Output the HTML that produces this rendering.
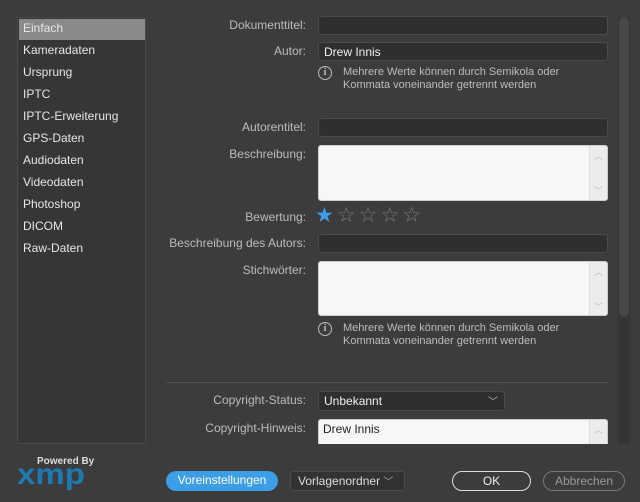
<!DOCTYPE html>
<html><head><meta charset="utf-8"><style>
*{box-sizing:border-box;margin:0;padding:0}
body{width:640px;height:502px;background:#3c3c3c;font-family:"Liberation Sans","DejaVu Sans",sans-serif;font-size:12px;color:#c8c8c8;position:relative;overflow:hidden}
.a{position:absolute}
.side{left:17px;top:17px;width:129px;height:427px;background:#363636;border:1px solid #4a4a4a;border-radius:2px}
.it{position:absolute;left:5px;color:#e6e6e6;font-size:12px}
.sel{left:1px;top:1px;width:126px;height:21px;background:#8a8a8a;position:absolute}
.lb{position:absolute;right:334px;text-align:right;color:#bcbcbc;white-space:nowrap}
.in{position:absolute;left:318px;width:290px;height:19px;background:#2f2f2f;border:1px solid #4a4a4a;border-radius:3px;color:#f0f0f0;padding:2px 5px}
.ta{position:absolute;left:318px;width:290px;background:#f7f7f7;border:1px solid #ccc;border-radius:3px;color:#222;padding:2px 4px;overflow:hidden}
.ta .sb{position:absolute;right:0;top:0;bottom:0;width:18px;background:#ececec;border-left:1px solid #ddd;color:#bbb;font-size:9px;text-align:center}
.info{position:absolute;left:343px;color:#bcbcbc;font-size:11px;line-height:13px}
.ic{position:absolute;left:318px;width:14px;height:14px;border:1.5px solid #bcbcbc;border-radius:50%;color:#bcbcbc;font-size:10px;font-weight:bold;text-align:center;line-height:11px;font-family:"Liberation Serif",serif}
.btn{position:absolute;top:471px;height:20px;border-radius:10px;text-align:center;line-height:18px;font-size:12px}
</style></head><body>
<div class="a side"><div class="sel"></div>
<div class="it" style="top:3px">Einfach</div>
<div class="it" style="top:25px">Kameradaten</div>
<div class="it" style="top:47px">Ursprung</div>
<div class="it" style="top:69px">IPTC</div>
<div class="it" style="top:91px">IPTC-Erweiterung</div>
<div class="it" style="top:113px">GPS-Daten</div>
<div class="it" style="top:135px">Audiodaten</div>
<div class="it" style="top:157px">Videodaten</div>
<div class="it" style="top:179px">Photoshop</div>
<div class="it" style="top:201px">DICOM</div>
<div class="it" style="top:223px">Raw-Daten</div>
</div>

<div class="lb" style="top:18px">Dokumenttitel:</div>
<div class="in" style="top:16px"></div>
<div class="lb" style="top:44px">Autor:</div>
<div class="in" style="top:42px">Drew Innis</div>
<div class="ic" style="top:66px">i</div>
<div class="info" style="top:66px">Mehrere Werte können durch Semikola oder<br>Kommata voneinander getrennt werden</div>
<div class="lb" style="top:120px">Autorentitel:</div>
<div class="in" style="top:118px"></div>
<div class="lb" style="top:147px">Beschreibung:</div>
<div class="ta" style="top:145px;height:56px"><div class="sb"><div style="margin-top:3px">︿</div><div style="margin-top:22px">﹀</div></div></div>
<div class="lb" style="top:210px">Bewertung:</div>
<div class="a" style="left:315px;top:203px;font-size:21px;letter-spacing:3px;color:#7a7a7a"><span style="color:#3d9ee8">★</span>☆☆☆☆</div>
<div class="lb" style="top:236px">Beschreibung des Autors:</div>
<div class="in" style="top:234px"></div>
<div class="lb" style="top:263px">Stichwörter:</div>
<div class="ta" style="top:261px;height:55px"><div class="sb"><div style="margin-top:3px">︿</div><div style="margin-top:22px">﹀</div></div></div>
<div class="ic" style="top:322px">i</div>
<div class="info" style="top:322px">Mehrere Werte können durch Semikola oder<br>Kommata voneinander getrennt werden</div>
<div class="a" style="left:166px;top:382px;width:442px;height:1px;background:#505050"></div>
<div class="lb" style="top:393px">Copyright-Status:</div>
<div class="in" style="top:391px;width:187px;height:20px">Unbekannt<span style="position:absolute;right:6px;top:1px;color:#bbb;font-size:10px">﹀</span></div>
<div class="lb" style="top:421px">Copyright-Hinweis:</div>
<div class="ta" style="top:419px;height:30px;border-bottom:none;border-radius:3px 3px 0 0">Drew Innis<div class="sb" style="bottom:-10px"><div style="margin-top:3px">︿</div></div></div>
<div class="a" style="left:0;top:444px;width:640px;height:58px;background:#3c3c3c"></div>

<div class="a" style="left:618px;top:17px;width:12px;height:427px;background:#353535"></div>
<div class="a" style="left:619px;top:17px;width:10px;height:300px;background:#474747;border-radius:5px"></div>

<div class="a" style="left:37px;top:456px;font-size:10px;font-weight:bold;color:#ddd">Powered By</div>
<div class="a" style="left:17px;top:460px;font-size:30px;font-weight:bold;color:#1d7ab0;letter-spacing:0px;line-height:30px;transform:scaleX(1.1);transform-origin:left">xmp</div>

<div class="btn" style="left:166px;width:112px;background:#3d9ee8;color:#fff">Voreinstellungen</div>
<div class="btn" style="left:290px;width:115px;background:#323232;border:1px solid #4a4a4a;border-radius:3px;color:#ddd;text-align:left;padding-left:7px">Vorlagenordner <span style="color:#aaa;font-size:10px">﹀</span></div>
<div class="btn" style="left:452px;width:79px;border:1px solid #ddd;color:#eee">OK</div>
<div class="btn" style="left:543px;width:82px;border:1px solid #777;color:#999">Abbrechen</div>
</body></html>
